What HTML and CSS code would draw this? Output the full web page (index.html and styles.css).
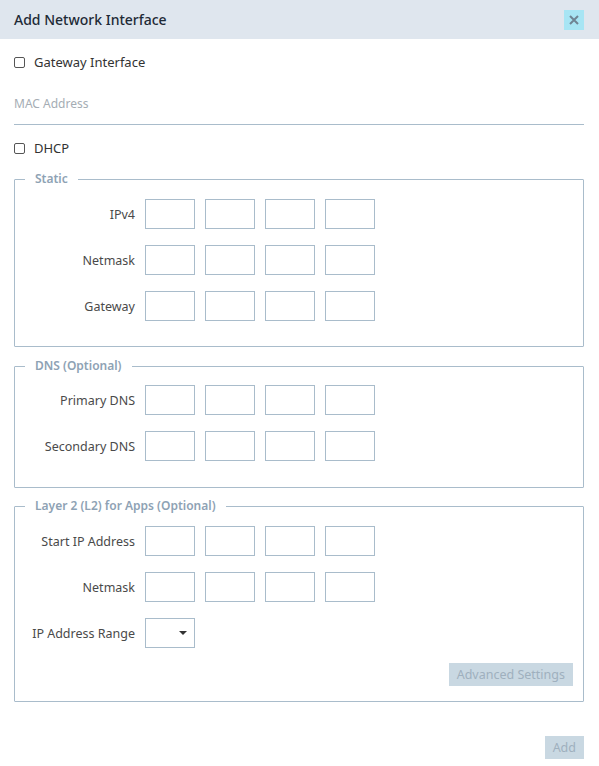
FILE: index.html
```html
<!DOCTYPE html>
<html>
<head>
<meta charset="utf-8">
<link rel="stylesheet" href="styles.css">
</head>
<body>
<div class="dialog">
  <div class="header">
    <span class="title">Add Network Interface</span>
    <button class="close" aria-label="Close">
      <svg width="10" height="10" viewBox="0 0 10 10"><path d="M1 1 L9 9 M9 1 L1 9" stroke="#6f8493" stroke-width="2" fill="none"/></svg>
    </button>
  </div>
  <div class="body">
    <label class="check gw"><span class="box"></span>Gateway Interface</label>
    <div class="mac">MAC Address</div>
    <label class="check dhcp"><span class="box"></span>DHCP</label>

    <fieldset class="group g-static">
      <legend>Static</legend>
      <div class="row"><span class="lbl">IPv4</span><span class="ip"></span><span class="ip"></span><span class="ip"></span><span class="ip"></span></div>
      <div class="row"><span class="lbl">Netmask</span><span class="ip"></span><span class="ip"></span><span class="ip"></span><span class="ip"></span></div>
      <div class="row"><span class="lbl">Gateway</span><span class="ip"></span><span class="ip"></span><span class="ip"></span><span class="ip"></span></div>
    </fieldset>

    <fieldset class="group g-dns">
      <legend>DNS (Optional)</legend>
      <div class="row"><span class="lbl">Primary DNS</span><span class="ip"></span><span class="ip"></span><span class="ip"></span><span class="ip"></span></div>
      <div class="row"><span class="lbl">Secondary DNS</span><span class="ip"></span><span class="ip"></span><span class="ip"></span><span class="ip"></span></div>
    </fieldset>

    <fieldset class="group g-l2">
      <legend>Layer 2 (L2) for Apps (Optional)</legend>
      <div class="row"><span class="lbl">Start IP Address</span><span class="ip"></span><span class="ip"></span><span class="ip"></span><span class="ip"></span></div>
      <div class="row"><span class="lbl">Netmask</span><span class="ip"></span><span class="ip"></span><span class="ip"></span><span class="ip"></span></div>
      <div class="row"><span class="lbl">IP Address Range</span><span class="ip select"><svg width="8" height="4" viewBox="0 0 8 4"><path d="M0 0 H8 L4 4 Z" fill="#333"/></svg></span></div>
      <div class="adv-wrap"><button class="btn">Advanced Settings</button></div>
    </fieldset>

    <div class="footer"><button class="btn">Add</button></div>
  </div>
</div>
</body>
</html>
```

FILE: styles.css
```css
* { box-sizing: border-box; }
html, body { margin: 0; padding: 0; background: #fff; }
body { font-family: "Noto Sans", "Open Sans", sans-serif; font-size: 13px; color: #333; }

.dialog { width: 599px; height: 766px; background: #fff; }

.header {
  height: 39px;
  background: #dfe6ee;
  display: flex;
  align-items: center;
  justify-content: space-between;
  padding: 0 15px 0 14px;
}
.title { font-size: 14px; color: #1e2a36; font-weight: 500; }
.close {
  width: 20px; height: 20px;
  border: 0; padding: 0; margin: 0;
  background: #a7e5f4;
  display: flex; align-items: center; justify-content: center;
}

.body { padding: 0 15px 0 14px; }

.check { display: flex; align-items: center; gap: 9px; color: #333; height: 18px; }
.box {
  width: 11px; height: 11px;
  border: 1px solid #555;
  border-radius: 2px;
  background: #fff;
}
.gw { margin-top: 14px; }
.mac {
  margin-top: 22px;
  padding-top: 2px;
  color: #a5adb4;
  font-size: 12px;
  height: 32px;
  border-bottom: 1px solid #a9bccb;
}
.dhcp { margin-top: 14px; }

.group {
  margin: 12px 0 0 0;
  padding: 0 10px 25px 10px;
  border: 1px solid #a9bccb;
  border-radius: 1px;
  min-width: 0;
}
.group legend {
  padding: 0 10px;
  font-size: 12px;
  line-height: 16px;
  font-weight: 600;
  color: #8ea2b4;
}
.g-static { margin-top: 14px; padding-top: 12px; }
.g-dns { margin-top: 11px; padding-top: 11px; padding-bottom: 26px; }
.g-l2 { margin-top: 10px; padding-top: 12px; padding-bottom: 15px; }

.row { display: flex; align-items: center; gap: 10px; height: 30px; }
.row + .row { margin-top: 16px; }
.lbl { width: 110px; text-align: right; color: #4a4a4a; font-size: 12.5px; }
.ip {
  width: 50px; height: 30px;
  border: 1px solid #a9bccb;
  background: #fff;
}
.select { display: flex; align-items: center; justify-content: flex-end; padding-right: 7px; }

.adv-wrap { display: flex; justify-content: flex-end; margin-top: 15px; }
.btn {
  font-family: inherit;
  font-size: 12.5px;
  height: 23px;
  border: 0;
  padding: 0 8px;
  background: #c9d8e2;
  color: #9fb0be;
  border-radius: 0;
}

.footer { display: flex; justify-content: flex-end; margin-top: 34px; }
```
